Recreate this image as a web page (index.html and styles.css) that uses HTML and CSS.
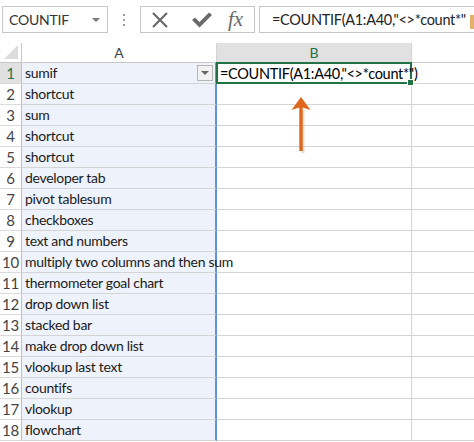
FILE: index.html
```html
<!DOCTYPE html>
<html>
<head>
<meta charset="utf-8">
<link rel="stylesheet" href="styles.css">
</head>
<body>
<div class="toolbar">
  <div class="namebox"><span class="nb-text">COUNTIF</span><span class="nb-arrow"></span></div>
  <div class="dots"><i></i><i></i><i></i></div>
  <div class="btnbox">
    <svg class="ico-x" width="18" height="18" viewBox="0 0 18 18"><path d="M2 2 L16 16 M16 2 L2 16" stroke="#6a6a6a" stroke-width="2.2" fill="none"/></svg>
    <svg class="ico-check" width="22" height="18" viewBox="0 0 22 18"><path d="M1 9 L4 6.5 L8.5 11 L18 1.5 L21 4 L8.5 16.5 Z" fill="#6a6a6a"/></svg>
    <span class="fx">fx</span>
  </div>
  <div class="input"><span class="in-text">=COUNTIF(A1:A40,"&lt;&gt;*count*"</span><span class="in-mark"></span></div>
</div>
<div class="sheet">
  <div class="corner"><span class="tri"></span></div>
  <div class="colh">A</div>
  <div class="colh sel">B</div>
  <div class="colh last"></div>

  <div class="rowh sel">1</div>
  <div class="cell a">sumif<span class="dd"><span></span></span></div>
  <div class="cell b active">=COUNTIF(A1:A40,"&lt;&gt;*count*")<span class="handle"></span></div>
  <div class="cell c"></div>

  <div class="rowh">2</div><div class="cell a">shortcut</div><div class="cell b"></div><div class="cell c"></div>
  <div class="rowh">3</div><div class="cell a">sum</div><div class="cell b"></div><div class="cell c"></div>
  <div class="rowh">4</div><div class="cell a">shortcut</div><div class="cell b"></div><div class="cell c"></div>
  <div class="rowh">5</div><div class="cell a">shortcut</div><div class="cell b"></div><div class="cell c"></div>
  <div class="rowh">6</div><div class="cell a">developer tab</div><div class="cell b"></div><div class="cell c"></div>
  <div class="rowh">7</div><div class="cell a">pivot tablesum</div><div class="cell b"></div><div class="cell c"></div>
  <div class="rowh">8</div><div class="cell a">checkboxes</div><div class="cell b"></div><div class="cell c"></div>
  <div class="rowh">9</div><div class="cell a">text and numbers</div><div class="cell b"></div><div class="cell c"></div>
  <div class="rowh">10</div><div class="cell a over">multiply two columns and then sum</div><div class="cell b"></div><div class="cell c"></div>
  <div class="rowh">11</div><div class="cell a">thermometer goal chart</div><div class="cell b"></div><div class="cell c"></div>
  <div class="rowh">12</div><div class="cell a">drop down list</div><div class="cell b"></div><div class="cell c"></div>
  <div class="rowh">13</div><div class="cell a">stacked bar</div><div class="cell b"></div><div class="cell c"></div>
  <div class="rowh">14</div><div class="cell a">make drop down list</div><div class="cell b"></div><div class="cell c"></div>
  <div class="rowh">15</div><div class="cell a">vlookup last text</div><div class="cell b"></div><div class="cell c"></div>
  <div class="rowh">16</div><div class="cell a">countifs</div><div class="cell b"></div><div class="cell c"></div>
  <div class="rowh">17</div><div class="cell a">vlookup</div><div class="cell b"></div><div class="cell c"></div>
  <div class="rowh">18</div><div class="cell a">flowchart</div><div class="cell b"></div><div class="cell c"></div>

  <svg class="arrow" width="30" height="64" viewBox="0 0 30 64">
    <path d="M16 14 L16 57" stroke="#c9b8a8" stroke-width="3" opacity="0.5"/>
    <path d="M14 11 L14 55" stroke="#e0661c" stroke-width="3.4"/>
    <path d="M14 1 L23.5 14 L14 11 L4.5 14 Z" fill="#e0661c"/>
  </svg>
</div>
</body>
</html>
```
FILE: styles.css
```css
html, body { margin: 0; padding: 0; background: #fff; }
body { width: 474px; height: 442px; overflow: hidden; font-family: Lato, "Liberation Sans", sans-serif; }

.toolbar { display: flex; align-items: flex-start; height: 43px; padding-top: 6px; box-sizing: border-box; }
.namebox { margin-left: 2px; width: 106px; height: 27px; box-sizing: border-box; border: 1px solid #c6c6c6; display: flex; align-items: center; justify-content: space-between; padding: 0 7px 0 6px; }
.nb-text { font-size: 14px; letter-spacing: -0.2px; color: #333; }
.nb-arrow { width: 0; height: 0; border-left: 4px solid transparent; border-right: 4px solid transparent; border-top: 4px solid #777; }
.dots { width: 32px; height: 27px; display: flex; flex-direction: column; align-items: center; justify-content: center; gap: 3px; }
.dots i { display: block; width: 2px; height: 2px; background: #a0a0a0; }
.btnbox { width: 115px; height: 27px; box-sizing: border-box; border: 1px solid #c6c6c6; display: flex; align-items: center; padding-left: 10px; }
.ico-x { margin-right: 22px; }
.ico-check { margin-right: 15px; }
.fx { font-family: "Liberation Serif", serif; font-style: italic; font-size: 21px; color: #6a6a6a; line-height: 1; }
.input { margin-left: 4px; flex: 1; height: 27px; box-sizing: border-box; border: 1px solid #c6c6c6; border-right: none; display: flex; align-items: center; padding-left: 12px; overflow: hidden; white-space: nowrap; position: relative; }
.in-text { font-size: 14.5px; letter-spacing: -0.3px; color: #222; }
.in-mark { position: absolute; right: 0; top: 8px; width: 4px; height: 14px; background: #e3b16a; }

.sheet { position: relative; display: grid; grid-template-columns: 22px 195px 195px 62px; grid-template-rows: 20px repeat(18, 21px); }
.corner { border-right: 1px solid #c8c8c8; border-bottom: 1px solid #c8c8c8; box-sizing: border-box; position: relative; }
.tri { position: absolute; right: 3px; bottom: 3px; width: 0; height: 0; border-left: 14px solid transparent; border-bottom: 14px solid #dcdcdc; }
.colh { box-sizing: border-box; border-right: 1px solid #d4d4d4; border-bottom: 1px solid #c8c8c8; font-size: 14px; color: #444; text-align: center; line-height: 19px; }
.colh.sel { background: #e1e1e1; color: #217346; border-bottom: 1px solid #bcbcbc; }
.colh.last { border-right: none; }
.rowh { box-sizing: border-box; border-right: 1px solid #c0c0c0; border-bottom: 1px solid #dadada; font-size: 15px; letter-spacing: -0.3px; color: #444; text-align: center; line-height: 20px; }
.rowh.sel { background: #e1e1e1; color: #217346; }
.cell { box-sizing: border-box; border-right: 1px solid #d4d4d4; border-bottom: 1px solid #d4d4d4; font-size: 14px; letter-spacing: -0.3px; color: #1a1a1a; line-height: 20px; padding-left: 3px; white-space: nowrap; position: relative; }
.cell.a { background: #eef2fa; border-right: 2px solid #5f91dc; }
.cell.over { overflow: visible; z-index: 1; }
.cell.c { border-right: none; }
.dd { position: absolute; right: 2px; top: 2px; width: 16px; height: 16px; box-sizing: border-box; border: 1px solid #b5b5b5; background: #f2f2f2; display: flex; align-items: center; justify-content: center; }
.dd span { width: 0; height: 0; border-left: 4px solid transparent; border-right: 4px solid transparent; border-top: 4px solid #666; }
.cell.active { border: 2px solid #217346; margin-left: -1px; margin-top: -1px; padding-left: 2px; line-height: 19px; font-size: 14.5px; color: #000; z-index: 2; overflow: visible; }
.handle { position: absolute; right: -4px; bottom: -4px; width: 5px; height: 5px; background: #217346; border: 1px solid #fff; }
.arrow { position: absolute; left: 287px; top: 53px; z-index: 3; }
```
